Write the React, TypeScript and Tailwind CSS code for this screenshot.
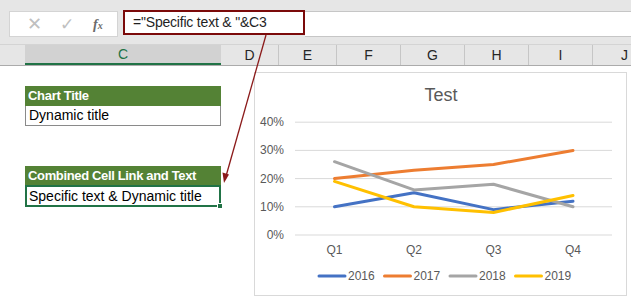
const cols = [
  { l: "", w: "w-[25px]" },
  { l: "C", w: "w-[196px]", sel: true },
  { l: "D", w: "w-[58px]" },
  { l: "E", w: "w-[58px]" },
  { l: "F", w: "w-[64px]" },
  { l: "G", w: "w-[64px]" },
  { l: "H", w: "w-[64px]" },
  { l: "I", w: "w-[64px]" },
  { l: "J", w: "w-[64px]" },
];

const series = [
  { name: "2016", color: "#4472C4", data: [10, 15, 9, 12] },
  { name: "2017", color: "#ED7D31", data: [20, 23, 25, 30] },
  { name: "2018", color: "#A5A5A5", data: [26, 16, 18, 10] },
  { name: "2019", color: "#FFC000", data: [19, 10, 8, 14] },
];

const xs = [79.5, 159, 238.5, 318];
const y = (v: number) => 162 - v * 2.82;

function Chart() {
  return (
    <div className="w-[373px] h-[224px] border border-[#d9d9d9] bg-white">
      <svg width="371" height="222" className="font-['Liberation_Sans',sans-serif]">
        <text x="186" y="28" textAnchor="middle" fontSize="18" fill="#595959">
          Test
        </text>
        {[0, 10, 20, 30, 40].map((v) => (
          <g key={v}>
            <line x1="40" x2="357" y1={y(v)} y2={y(v)} stroke="#d9d9d9" strokeWidth="1" />
            <text x="29" y={y(v) + 4} textAnchor="end" fontSize="12" fill="#595959">
              {v}%
            </text>
          </g>
        ))}
        {["Q1", "Q2", "Q3", "Q4"].map((q, i) => (
          <text key={q} x={xs[i]} y="181" textAnchor="middle" fontSize="12" fill="#595959">
            {q}
          </text>
        ))}
        {series.map((s) => (
          <polyline
            key={s.name}
            points={s.data.map((v, i) => `${xs[i]},${y(v)}`).join(" ")}
            fill="none"
            stroke={s.color}
            strokeWidth="3"
            strokeLinejoin="round"
            strokeLinecap="round"
          />
        ))}
        {series.map((s, i) => (
          <g key={s.name}>
            <line x1={64 + i * 65.5} x2={90 + i * 65.5} y1="203" y2="203" stroke={s.color} strokeWidth="3" strokeLinecap="round" />
            <text x={93 + i * 65.5} y="207" fontSize="12" fill="#595959">
              {s.name}
            </text>
          </g>
        ))}
      </svg>
    </div>
  );
}

export default function App() {
  return (
    <div className="relative w-[631px] h-[301px] overflow-hidden bg-white font-['Liberation_Sans',sans-serif]">
      {/* formula bar */}
      <div className="h-[45px] bg-[#e6e6e6] flex items-start pt-[10px] border-b border-[#d4d4d4]">
        <div className="ml-[9px] w-[109px] h-[26px] mt-px bg-white border border-[#d4d4d4] flex items-center">
          <span className="ml-[17px] text-[#c0c0c0] text-[18px] leading-none">✕</span>
          <span className="ml-[18px] text-[#c0c0c0] text-[17px] leading-none">✓</span>
          <span className="ml-[19px] text-[#6b6b6b] text-[14px] italic font-['Liberation_Serif',serif] font-bold">
            f<span className="text-[10px]">x</span>
          </span>
        </div>
        <div className="ml-[5px] w-[182px] h-[25px] border-2 border-[#7b0a0a] bg-white flex items-center pl-[8px] text-[14px] text-[#1f1f1f] whitespace-nowrap tracking-[-0.2px]">
          ="Specific text &amp; "&amp;C3
        </div>
        <div className="flex-1 h-[26px] mt-px bg-white border-y border-[#c6c6c6]" />
      </div>
      {/* column headers */}
      <div className="flex h-[21px] bg-[#e6e6e6] border-b border-[#ababab]">
        {cols.map((c, i) => (
          <div
            key={i}
            className={`${c.w} shrink-0 flex items-center justify-center text-[14px] ${
              c.sel
                ? "bg-[#d2d2d2] text-[#217346] border-b-2 border-[#217346]"
                : "text-[#262626]"
            } ${i > 1 ? "border-r border-[#c6c6c6]" : ""}`}
          >
            {c.l}
          </div>
        ))}
      </div>
      {/* sheet body */}
      <div className="flex">
        <div className="ml-[25px] mt-[20px] w-[196px] text-[14px]">
          <div className="h-[20px] bg-[#548235] text-white text-[13px] tracking-[-0.3px] font-bold pl-[3px] leading-[20px]">Chart Title</div>
          <div className="h-[20px] border border-t-0 border-[#8a8a8a] pl-[3px] leading-[19px] text-black">Dynamic title</div>
          <div className="mt-[40px] h-[19px] bg-[#548235] text-white text-[13px] tracking-[-0.35px] font-bold pl-[3px] leading-[19px] whitespace-nowrap">
            Combined Cell Link and Text
          </div>
          <div className="relative h-[22px] border-2 border-[#217346] pl-[2px] leading-[18px] text-black whitespace-nowrap">
            Specific text &amp; Dynamic title
            <div className="absolute -right-[4px] -bottom-[4px] w-[6px] h-[6px] bg-[#217346] border border-white" />
          </div>
        </div>
        <div className="ml-[33px] mt-[6px]">
          <Chart />
        </div>
      </div>
      {/* arrow */}
      <svg className="absolute inset-0 pointer-events-none" width="631" height="301">
        <line x1="266" y1="35" x2="225.5" y2="178" stroke="#8b1a1a" strokeWidth="1.3" />
        <polygon points="224,183 222.5,172.5 229,174.5" fill="#8b1a1a" />
      </svg>
    </div>
  );
}
